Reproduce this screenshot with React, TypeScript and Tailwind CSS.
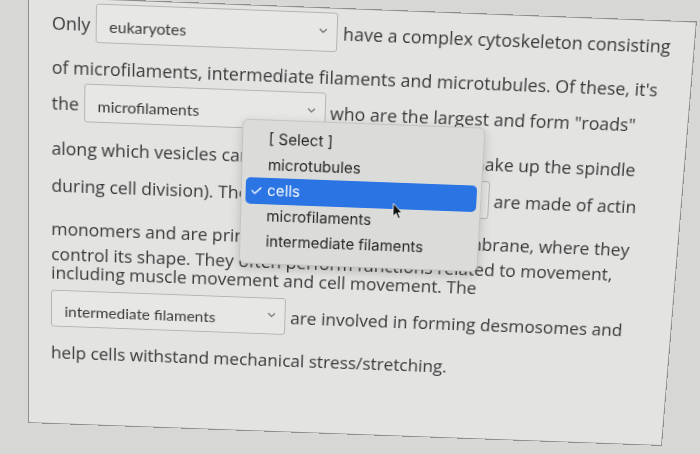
import React from "react";

function Chevron() {
  return (
    <svg
      width="9"
      height="6"
      viewBox="0 0 9 6"
      className="absolute right-[9px] top-[15px]"
    >
      <path d="M1 1l3.5 3.5L8 1" fill="none" stroke="#6a6a6a" strokeWidth="1.2" />
    </svg>
  );
}

function Sel({ className, value }: { className: string; value: string }) {
  return (
    <span
      className={
        "relative block shrink-0 h-[40px] mb-[4px] rounded-[3px] border border-[#b4b4b2] bg-[#e7e7e5] pl-[13px] pt-[6px] leading-[32px] text-[16px] text-[#3a3a3a] font-['Lato',sans-serif] " +
        className
      }
    >
      {value}
      <Chevron />
    </span>
  );
}

function Cursor() {
  return (
    <svg
      width="11"
      height="18"
      viewBox="0 0 11 18"
      className="absolute left-[373px] top-[198px]"
    >
      <path
        d="M1 1 L1 14.5 L4.2 11.5 L6.6 16.8 L8.6 15.9 L6.3 10.8 L10.2 10.8 Z"
        fill="#111"
        stroke="#f4f4f4"
        strokeWidth="0.9"
        strokeLinejoin="round"
      />
    </svg>
  );
}

function Popup() {
  const row = "h-[27px] flex items-center pl-[26px] text-[15.5px] text-[#262626]";
  return (
    <div className="absolute left-[217px] top-[116px] w-[247px] h-[153px] rounded-[6px] border border-[#c4c4c2] bg-[#dbdbd9] pt-[6px] pb-[10px] shadow-[0_4px_12px_rgba(0,0,0,0.18)] font-['Inter',sans-serif]">
      <div className={row}>[ Select ]</div>
      <div className={row}>microtubules</div>
      <div className="h-[28px] -my-[0.5px] mx-[4px] flex items-center rounded-[5px] bg-[#2a74e4] pl-[4px] text-[15.5px] text-white">
        <span className="w-[18px]">✓</span>
        <span>cells</span>
      </div>
      <div className={row}>microfilaments</div>
      <div className={row}>intermediate filaments</div>
    </div>
  );
}

const line = "flex h-[24px] items-center gap-[5px] whitespace-nowrap";

export default function App() {
  return (
    <div className="relative w-[700px] h-[454px] overflow-hidden bg-[#d7d7d6]">
      <div className="relative ml-[28px] -mt-[4px] w-[671px] h-[454px] origin-top-left [transform:perspective(1000px)_rotateX(-7deg)_skewY(2.2deg)] border border-[#8e8e8c] bg-[#e3e4e2]">
        <div className="pl-[23px] pt-[13.5px] text-[18px] text-[#393939] font-['Open_Sans',sans-serif]">
          <div className={line}>
            <span>Only</span>
            <Sel className="w-[243px]" value="eukaryotes" />
            <span className="ml-[1px]">have a complex cytoskeleton consisting</span>
          </div>
          <div className={line + " mt-[21px]"}>
            <span>of microfilaments, intermediate filaments and microtubules. Of these, it's</span>
          </div>
          <div className={line + " mt-[13px]"}>
            <span>the</span>
            <Sel className="w-[245px]" value="microfilaments" />
            <span>who are the largest and form "roads"</span>
          </div>
          <div className={line + " mt-[23px]"}>
            <span>along which vesicles carry the cargo (and they also make up the spindle</span>
          </div>
          <div className={line + " mt-[15px]"}>
            <span>during cell division). The</span>
            <Sel className="w-[242px]" value="cells" />
            <span>are made of actin</span>
          </div>
          <div className={line + " mt-[22px]"}>
            <span>monomers and are principally found by the cell membrane, where they</span>
          </div>
          <div className={line + " mt-[3px]"}>
            <span>control its shape. They often perform functions related to movement,</span>
          </div>
          <div className={line + " -mt-[4px]"}>
            <span>including muscle movement and cell movement. The</span>
          </div>
          <div className={line + " mt-[16px]"}>
            <Sel className="w-[244px]" value="intermediate filaments" />
            <span>are involved in forming desmosomes and</span>
          </div>
          <div className={line + " mt-[23px]"}>
            <span>help cells withstand mechanical stress/stretching.</span>
          </div>
        </div>
        <Popup />
        <Cursor />
      </div>
    </div>
  );
}
